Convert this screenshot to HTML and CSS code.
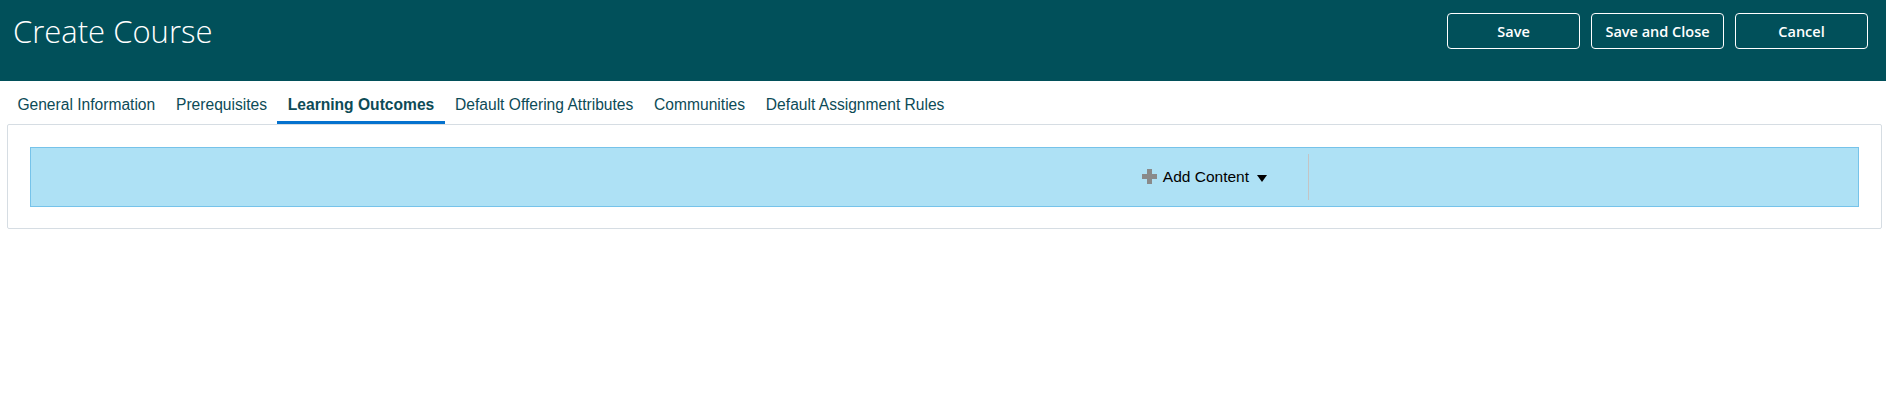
FILE: index.html
```html
<!DOCTYPE html>
<html lang="en">
<head>
<meta charset="utf-8">
<title>Create Course</title>
<link rel="stylesheet" href="styles.css">
</head>
<body>
<header class="page-header">
  <h1 class="page-title">Create Course</h1>
  <div class="header-actions">
    <button class="hdr-btn" type="button">Save</button>
    <button class="hdr-btn" type="button">Save and Close</button>
    <button class="hdr-btn" type="button">Cancel</button>
  </div>
</header>
<main class="page-body">
  <nav class="tabs">
    <a class="tab">General Information</a>
    <a class="tab">Prerequisites</a>
    <a class="tab tab-active">Learning Outcomes</a>
    <a class="tab">Default Offering Attributes</a>
    <a class="tab">Communities</a>
    <a class="tab">Default Assignment Rules</a>
  </nav>
  <section class="panel">
    <div class="toolbar">
      <div class="toolbar-main">
        <button class="add-btn" type="button">
          <svg class="plus-icon" width="15" height="15" viewBox="0 0 15 15" aria-hidden="true">
            <rect x="5" y="0" width="5" height="15" fill="#8a8a8a"/>
            <rect x="0" y="5" width="15" height="5" fill="#8a8a8a"/>
          </svg>
          <span class="add-label">Add Content</span>
          <svg class="caret" width="10" height="7" viewBox="0 0 10 7" aria-hidden="true">
            <polygon points="0,0 10,0 5,7" fill="#000"/>
          </svg>
        </button>
      </div>
      <div class="toolbar-side"></div>
    </div>
  </section>
</main>
</body>
</html>
```

FILE: styles.css
```css
* { box-sizing: border-box; }

html, body {
  margin: 0;
  padding: 0;
  background: #ffffff;
  font-family: "Liberation Sans", Arial, sans-serif;
}

.page-header {
  height: 81px;
  background: #01505a;
  display: flex;
  justify-content: space-between;
  align-items: flex-start;
  padding: 13px 18px 0 13px;
}

.page-title {
  margin: 0;
  font-family: "Open Sans", "Noto Sans", sans-serif;
  font-weight: 300;
  font-size: 31px;
  line-height: 36px;
  color: #ffffff;
}

.header-actions {
  display: flex;
  gap: 11px;
}

.hdr-btn {
  width: 133px;
  height: 36px;
  border: 1px solid #ffffff;
  border-radius: 4px;
  background: transparent;
  color: #ffffff;
  font-family: "Open Sans", "Noto Sans", sans-serif;
  font-weight: 600;
  font-size: 14.5px;
  padding: 0;
  cursor: pointer;
}

.page-body {
  padding: 0 4px 0 7px;
}

.tabs {
  display: flex;
}

.tab {
  display: block;
  padding: 14px 10.4px 6px;
  line-height: 20px;
  font-size: 15.6px;
  color: #0d4b57;
  border-bottom: 3px solid transparent;
  white-space: nowrap;
  cursor: pointer;
}

.tab-active {
  font-weight: bold;
  border-bottom-color: #0572ce;
}

.panel {
  border: 1px solid #d6dde3;
  border-radius: 2px;
  padding: 22px 22px 21px;
}

.toolbar {
  height: 60px;
  background: #aee1f5;
  border: 1px solid #76c3ea;
  display: flex;
}

.toolbar-main {
  flex: 0 0 1277px;
  display: flex;
  justify-content: flex-end;
  align-items: center;
  padding-right: 41px;
}

.toolbar-side {
  flex: 1 1 auto;
  border-left: 1px solid #c4c4c4;
  margin: 6px 0;
}

.add-btn {
  display: flex;
  align-items: center;
  background: transparent;
  border: 0;
  padding: 0;
  font-family: "Liberation Sans", Arial, sans-serif;
  font-size: 15.5px;
  color: #000000;
  cursor: pointer;
}

.plus-icon {
  margin-right: 6px;
  margin-top: -1px;
}

.add-label {
  line-height: 20px;
}

.caret {
  margin-left: 8px;
  margin-top: 3px;
}
```
